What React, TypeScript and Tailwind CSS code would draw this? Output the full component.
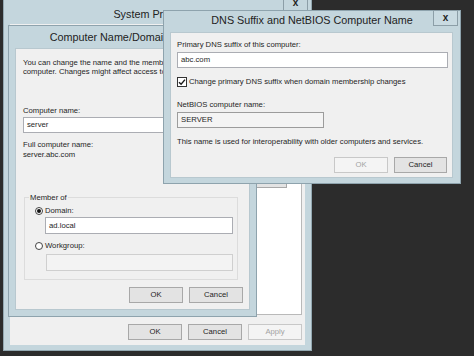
import React from "react";

const F = "font-['Liberation_Sans',Arial,sans-serif]";

function Btn({ label, disabled, w = "w-[54px]" }: { label: string; disabled?: boolean; w?: string }) {
  return (
    <div
      className={`${w} h-[16px] flex items-center justify-center text-[7.7px] leading-none border ${
        disabled ? "bg-[#f4f4f4] border-[#c8c8c8] text-[#a3a3a3]" : "bg-[#e3e3e3] border-[#a8a8a8] text-[#1e1e1e]"
      }`}
    >
      {label}
    </div>
  );
}

function Radio({ checked }: { checked?: boolean }) {
  return (
    <div className="w-[8px] h-[8px] rounded-full border border-[#444] bg-white flex items-center justify-center shrink-0">
      {checked && <div className="w-[4px] h-[4px] rounded-full bg-[#111]" />}
    </div>
  );
}

export default function App() {
  return (
    <div className={`relative w-[474px] h-[356px] overflow-hidden bg-[#2c2c2c] ${F} text-[#1e1e1e]`}>
      {/* System Properties (outer window) */}
      <div className="absolute left-[3px] top-[-8px] w-[309px] h-[359px] bg-[#c4d6dd] border border-[#93a8b1] flex flex-col">
        <div className="h-[31px] pt-[15px] text-[10.8px] leading-[12px] text-center text-[#222]">System Properties</div>
        <div className="absolute right-[3px] top-0 w-[25px] h-[18px] border border-[#8c9ea7] border-t-0 flex items-end justify-center pb-[2px] text-[10px] font-bold leading-none text-[#222]">
          x
        </div>
        <div className="mx-[6px] h-[321px] bg-[#f0f0f0] flex flex-col">
          <div className="ml-[6px] mr-[3px] mt-[24px] h-[267px] bg-white border border-[#b9b9b9] flex flex-col">
            <div className="ml-[183px] mt-[121px] w-[87px] h-[18px] bg-[#e3e3e3] border border-[#a8a8a8]" />
          </div>
          <div className="mt-[9px] mr-[3px] flex justify-end gap-[6px]">
            <Btn label="OK" />
            <Btn label="Cancel" />
            <Btn label="Apply" disabled />
          </div>
        </div>
      </div>

      {/* Computer Name/Domain Changes */}
      <div className="absolute left-[8px] top-[25px] w-[249px] h-[292px] bg-[#c4d6dd] border border-[#8ea3ad] flex flex-col">
        <div className="h-[22px] flex items-center justify-center text-[10.8px] leading-none text-[#222]">
          Computer Name/Domain Changes
        </div>
        <div className="mx-[6px] h-[262px] bg-[#f0f0f0] border border-[#b8c8cf] flex flex-col text-[7.7px]">
          <div className="mt-[9px] px-[7px] leading-[9px] whitespace-nowrap">
            You can change the name and the membership of this
            <br />
            computer. Changes might affect access to network resources.
          </div>
          <div className="mt-[30px] px-[7px] leading-[9px]">Computer name:</div>
          <div className="mt-[2px] ml-[7px] w-[210px] h-[16px] bg-white border border-[#abadb3] flex items-center pl-[3px] leading-none">
            server
          </div>
          <div className="mt-[7px] px-[7px] leading-[10px]">
            Full computer name:
            <br />
            server.abc.com
          </div>
          <div className="relative mt-[37px] ml-[8px] mr-[11px] h-[83px] border border-[#dcdcdc] flex flex-col pl-[10px] pt-[8px]">
            <div className="absolute left-[4px] top-[-5px] px-[1px] bg-[#f0f0f0] leading-[9px]">Member of</div>
            <div className="flex items-center gap-[2px] h-[10px] leading-[10px]">
              <Radio checked />
              <span>Domain:</span>
            </div>
            <div className="mt-[1px] ml-[10px] w-[188px] h-[17px] bg-white border border-[#abadb3] flex items-center pl-[3px] leading-none">
              ad.local
            </div>
            <div className="mt-[7px] flex items-center gap-[2px] h-[10px] leading-[10px]">
              <Radio />
              <span>Workgroup:</span>
            </div>
            <div className="mt-[3px] ml-[11px] w-[187px] h-[17px] bg-[#f3f3f3] border border-[#cfcfcf]" />
          </div>
          <div className="mt-[7px] mr-[6px] flex justify-end gap-[6px]">
            <Btn label="OK" />
            <Btn label="Cancel" />
          </div>
        </div>
      </div>

      {/* DNS Suffix and NetBIOS Computer Name */}
      <div className="absolute left-[163px] top-[10px] w-[298px] h-[174px] bg-[#c4d6dd] border border-[#8ea3ad] flex flex-col">
        <div className="h-[21px] pb-[2px] flex items-center justify-center text-[10.8px] leading-none text-[#222]">
          DNS Suffix and NetBIOS Computer Name
        </div>
        <div className="absolute right-[2px] top-[-1px] w-[25px] h-[16px] border border-[#8c9ea7] bg-[#c9dae1] flex items-center justify-center text-[10px] font-bold leading-none text-[#222]">
          x
        </div>
        <div className="mx-[6px] mr-[7px] h-[146px] bg-[#f0f0f0] border border-[#b8c8cf] flex flex-col text-[7.7px]">
          <div className="mt-[7px] px-[6px] leading-[10px]">Primary DNS suffix of this computer:</div>
          <div className="mt-[2px] ml-[6px] w-[271px] h-[16px] bg-white border border-[#abadb3] flex items-center pl-[3px] leading-none">
            abc.com
          </div>
          <div className="mt-[9px] ml-[6px] flex items-center gap-[2px] h-[10px] leading-[10px]">
            <div className="w-[10px] h-[10px] border border-[#333] bg-white flex items-center justify-center shrink-0">
              <svg width="8" height="8" viewBox="0 0 8 8">
                <path d="M1 4.2 L3.1 6.3 L7 1.6" fill="none" stroke="#1a1a1a" strokeWidth="1.4" />
              </svg>
            </div>
            <span>Change primary DNS suffix when domain membership changes</span>
          </div>
          <div className="mt-[13px] px-[6px] leading-[10px]">NetBIOS computer name:</div>
          <div className="mt-[2px] ml-[6px] w-[147px] h-[16px] bg-[#f4f4f4] border border-[#9c9c9c] flex items-center pl-[3px] leading-none">
            SERVER
          </div>
          <div className="mt-[9px] px-[6px] leading-[10px] whitespace-nowrap">
            This name is used for interoperability with older computers and services.
          </div>
          <div className="mt-[10px] mr-[5px] flex justify-end gap-[6px]">
            <Btn label="OK" disabled />
            <Btn label="Cancel" w="w-[53px]" />
          </div>
        </div>
      </div>
    </div>
  );
}
